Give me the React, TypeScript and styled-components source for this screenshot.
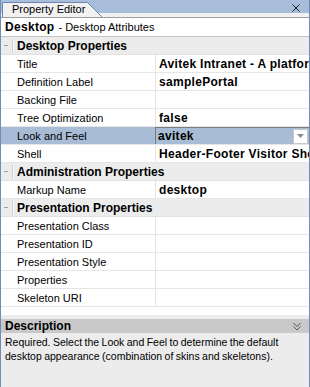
import React from "react";
import styled, { createGlobalStyle } from "styled-components";

const GlobalStyle = createGlobalStyle`
  html, body { margin: 0; padding: 0; background: #ffffff; }
  body { font-family: "Liberation Sans", Arial, sans-serif; font-size: 11px; color: #000; }
  * { box-sizing: border-box; }
`;

const Panel = styled.div`
  width: 310px;
  height: 387px;
  display: flex;
  flex-direction: column;
  border-left: 1px solid #6f8db6;
  border-right: 1px solid #6f8db6;
  background: #ffffff;
  overflow: hidden;
`;

const TitleBar = styled.div`
  height: 17px;
  flex: none;
  display: flex;
  align-items: flex-end;
  justify-content: space-between;
  background: linear-gradient(to bottom, #a7bdd9 0, #a7bdd9 13px, #f1f1f1 13px, #f1f1f1 100%);
`;

const Tab = styled.div`
  position: relative;
  margin-left: 1px;
  width: 101px;
  height: 15px;
  padding-left: 10px;
  line-height: 15px;
  font-size: 11px;
  white-space: nowrap;
  & > span { position: relative; }
`;

const TabShape = styled.svg`
  position: absolute;
  left: 0;
  top: 0;
`;

const CloseButton = styled.div`
  width: 10px;
  height: 10px;
  margin-right: 7px;
  align-self: flex-start;
  margin-top: 4px;
  display: flex;
`;

const Header = styled.div`
  height: 20px;
  flex: none;
  border-top: 1px solid #9d9d9d;
  border-bottom: 1px solid #c4c4c4;
  padding-left: 4px;
  display: flex;
  align-items: center;
  font-size: 11px;
  white-space: nowrap;
  & > b { font-size: 12px; font-weight: bold; margin-right: 4px; letter-spacing: 0.3px; }
`;

const Sheet = styled.div`
  display: flex;
  flex-direction: column;
`;

const SectionRow = styled.div`
  height: 18px;
  display: flex;
  align-items: center;
  background-color: #ececec;
  border-bottom: 1px solid #e2e2e2;
  font-weight: bold;
  font-size: 12px;
  white-space: nowrap;
`;

const Toggle = styled.span`
  width: 12px;
  height: 14px;
  margin-right: 4px;
  display: flex;
  align-items: center;
  justify-content: flex-start;
  padding-left: 3px;
  border-right: 1px solid #cfcfcf;
  box-shadow: 1px 0 0 #fafafa;
  &::before {
    content: "";
    width: 4px;
    height: 1px;
    background: #a0a0a0;
  }
`;

const PropRow = styled.div<{ $selected?: boolean }>`
  height: 18px;
  display: flex;
  border-bottom: 1px solid #e6e6e6;
  background: ${(p) => (p.$selected ? "#a9bcd6" : "#ffffff")};
`;

const LabelCell = styled.div`
  width: 155px;
  flex: none;
  padding-left: 16px;
  border-right: 1px solid #e4e4e4;
  display: flex;
  align-items: center;
  font-size: 11px;
  white-space: nowrap;
  overflow: hidden;
`;

const ValueCell = styled.div<{ $editing?: boolean }>`
  flex: 1;
  min-width: 0;
  display: flex;
  align-items: center;
  padding-left: ${(p) => (p.$editing ? "2px" : "3px")};
  font-weight: bold;
  font-size: 12px;
  letter-spacing: 0.3px;
  white-space: nowrap;
  overflow: hidden;
  ${(p) =>
    p.$editing
      ? "border-top: 1px solid #7c7c7c; border-left: 1px solid #7c7c7c; margin-left: -1px;"
      : ""}
`;

const ValueText = styled.span`
  flex: 1;
  overflow: hidden;
  white-space: nowrap;
`;

const DropButton = styled.div`
  width: 15px;
  height: 15px;
  margin-right: 1px;
  flex: none;
  background: #ffffff;
  border: 1px solid #c8c8c8;
  display: flex;
  align-items: center;
  justify-content: center;
`;

const Filler = styled.div`
  flex: 1;
  background: #ffffff;
`;

const Splitter = styled.div`
  height: 4px;
  flex: none;
  background: #ececec;
`;

const DescHeader = styled.div`
  height: 14px;
  flex: none;
  display: flex;
  align-items: center;
  justify-content: space-between;
  padding-left: 4px;
  padding-right: 8px;
  background: #c9c9c9;
  font-weight: bold;
  font-size: 12px;
`;

const DescBody = styled.div`
  flex: none;
  height: 54px;
  padding: 2px 4px 0 4px;
  background: #ececec;
  font-size: 10.5px;
  word-spacing: -0.5px;
  line-height: 14px;
`;

type Prop = { label: string; value?: string; selected?: boolean; editing?: boolean };
type Section = { title: string; props: Prop[] };

const sections: Section[] = [
  {
    title: "Desktop Properties",
    props: [
      { label: "Title", value: "Avitek Intranet - A platform for the enterprise" },
      { label: "Definition Label", value: "samplePortal" },
      { label: "Backing File" },
      { label: "Tree Optimization", value: "false" },
      { label: "Look and Feel", value: "avitek", selected: true, editing: true },
      { label: "Shell", value: "Header-Footer Visitor Shell" },
    ],
  },
  {
    title: "Administration Properties",
    props: [{ label: "Markup Name", value: "desktop" }],
  },
  {
    title: "Presentation Properties",
    props: [
      { label: "Presentation Class" },
      { label: "Presentation ID" },
      { label: "Presentation Style" },
      { label: "Properties" },
      { label: "Skeleton URI" },
    ],
  },
];

export default function App() {
  return (
    <>
      <GlobalStyle />
      <Panel>
        <TitleBar>
          <Tab>
            <TabShape width="101" height="15" viewBox="0 0 101 15">
              <path d="M0.5 15 V0.5 H85.5 L100 15 Z" fill="#f1f1f1" />
              <path d="M0.5 15 V0.5 H85.5 L100 15" fill="none" stroke="#6a88b1" strokeWidth="1" />
            </TabShape>
            <span>Property Editor</span>
          </Tab>
          <CloseButton>
            <svg width="8" height="8" viewBox="0 0 8 8">
              <path d="M0.5 0.5 L7.5 7.5 M7.5 0.5 L0.5 7.5" stroke="#222" strokeWidth="1" />
            </svg>
          </CloseButton>
        </TitleBar>
        <Header>
          <b>Desktop</b> - Desktop Attributes
        </Header>
        <Sheet>
          {sections.map((s) => (
            <React.Fragment key={s.title}>
              <SectionRow>
                <Toggle />
                {s.title}
              </SectionRow>
              {s.props.map((p) => (
                <PropRow key={p.label} $selected={p.selected}>
                  <LabelCell>{p.label}</LabelCell>
                  <ValueCell $editing={p.editing}>
                    <ValueText>{p.value ?? ""}</ValueText>
                    {p.editing && (
                      <DropButton>
                        <svg width="7" height="4" viewBox="0 0 7 4">
                          <path d="M0 0 H7 L3.5 4 Z" fill="#8a8a8a" />
                        </svg>
                      </DropButton>
                    )}
                  </ValueCell>
                </PropRow>
              ))}
            </React.Fragment>
          ))}
        </Sheet>
        <Filler />
        <Splitter />
        <DescHeader>
          Description
          <svg width="8" height="9" viewBox="0 0 8 9">
            <path d="M0.5 1 L4 4.5 L7.5 1 M0.5 4.5 L4 8 L7.5 4.5" fill="none" stroke="#555" strokeWidth="1" />
          </svg>
        </DescHeader>
        <DescBody>
          Required. Select the Look and Feel to determine the default desktop appearance (combination of skins and skeletons).
        </DescBody>
      </Panel>
    </>
  );
}
